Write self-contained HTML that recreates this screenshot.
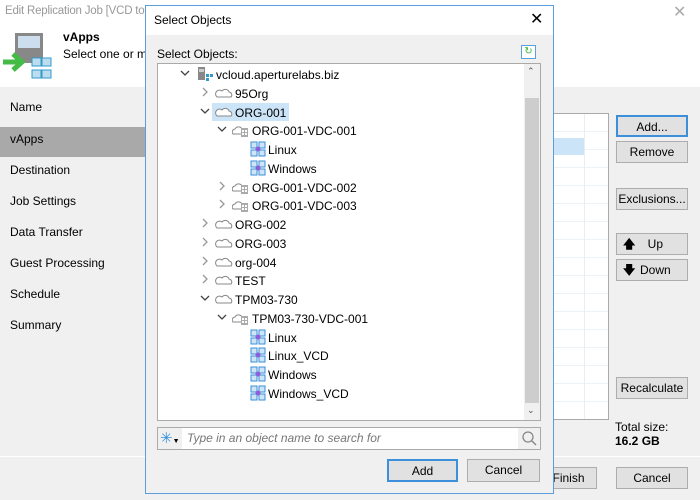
<!DOCTYPE html>
<html><head><style>
*{margin:0;padding:0;box-sizing:border-box}
body{width:700px;height:500px;overflow:hidden;background:#f0f0f0;font-family:"Liberation Sans",sans-serif;font-size:12px;color:#000;position:relative}
.a{position:absolute;white-space:nowrap}
.btn{position:absolute;background:#e1e1e1;border:1px solid #adadad;text-align:center;line-height:20px;font-size:12px}
.nav{position:absolute;left:10px;font-size:12px}
.row{position:absolute;height:18px;line-height:18px;font-size:12px;white-space:nowrap}
.chev{position:absolute;color:#555;font-size:10px}
</style></head><body>
<div class="a" style="left:0;top:0;width:700px;height:87px;background:#fff"></div>
<div class="a" style="left:5px;top:5px;color:#999;font-size:11.5px;letter-spacing:-0.2px">Edit Replication Job [VCD to</div>
<div class="a" style="left:673px;top:2px;color:#aaa;font-size:16px">✕</div>
<svg class="a" style="left:0;top:30px" width="55" height="52">
<rect x="15" y="3" width="28" height="30" fill="#888"/><rect x="18" y="6" width="22" height="12" fill="#cde"/>
<rect x="32" y="28" width="9" height="8" fill="#bde" stroke="#39c"/><rect x="42" y="28" width="9" height="8" fill="#bde" stroke="#39c"/><rect x="32" y="40" width="9" height="8" fill="#bde" stroke="#39c"/><rect x="42" y="40" width="9" height="8" fill="#bde" stroke="#39c"/>
<path d="M3 32h16M13 24l9 8-9 8" stroke="#4b4" stroke-width="5" fill="none"/>
</svg>
<div class="a" style="left:63px;top:30px;font-weight:bold">vApps</div>
<div class="a" style="left:63px;top:47px">Select one or mo</div>
<div class="a" style="left:0;top:127px;width:145px;height:30px;background:#a9a9a9"></div>
<div class="nav" style="top:100px">Name</div>
<div class="nav" style="top:132px">vApps</div>
<div class="nav" style="top:163px">Destination</div>
<div class="nav" style="top:194px">Job Settings</div>
<div class="nav" style="top:225px">Data Transfer</div>
<div class="nav" style="top:256px">Guest Processing</div>
<div class="nav" style="top:287px">Schedule</div>
<div class="nav" style="top:318px">Summary</div>
<div class="a" style="left:0;top:456px;width:700px;height:1px;background:#fff"></div>
<div class="a" style="left:545px;top:113px;width:64px;height:307px;border:1px solid #aaa;background:#fff repeating-linear-gradient(#fff 0 17px,#edf2f7 17px 18px)"></div>
<div class="a" style="left:553px;top:138px;width:31px;height:17px;background:#cce4f7"></div>
<div class="a" style="left:584px;top:114px;width:1px;height:305px;background:#e8eef5"></div>
<div class="btn" style="left:616px;top:115px;width:72px;height:22px;border:2px solid #3c8fd8">Add...</div>
<div class="btn" style="left:616px;top:141px;width:72px;height:22px">Remove</div>
<div class="btn" style="left:616px;top:188px;width:72px;height:22px">Exclusions...</div>
<div class="btn" style="left:616px;top:233px;width:72px;height:22px"><b style="position:absolute;left:6px">🡅</b>&nbsp;&nbsp;Up</div>
<div class="btn" style="left:616px;top:259px;width:72px;height:22px"><b style="position:absolute;left:6px">🡇</b>&nbsp;&nbsp;Down</div>
<div class="btn" style="left:616px;top:377px;width:72px;height:22px">Recalculate</div>
<div class="a" style="left:615px;top:420px">Total size:</div>
<div class="a" style="left:615px;top:434px;font-weight:bold">16.2 GB</div>
<div class="btn" style="left:540px;top:467px;width:57px;height:22px">Finish</div>
<div class="btn" style="left:616px;top:467px;width:72px;height:22px">Cancel</div>
<div class="a" style="left:145px;top:5px;width:409px;height:489px;background:#f0f0f0;border:1px solid #5a9fdc"></div>
<div class="a" style="left:146px;top:6px;width:407px;height:29px;background:#fff"></div>
<div class="a" style="left:154px;top:13px">Select Objects</div>
<div class="a" style="left:530px;top:9px;font-size:16px">✕</div>
<div class="a" style="left:157px;top:47px">Select Objects:</div>
<div class="a" style="left:521px;top:45px;width:15px;height:14px;border:1px solid #5aa0dc;background:#fff;color:#3b3;font-size:10px;line-height:12px;text-align:center">↻</div>
<div class="a" style="left:157px;top:63px;width:384px;height:358px;background:#fff;border:1px solid #aaa"></div>
<div class="a" style="left:524px;top:64px;width:16px;height:356px;background:#f0f0f0"></div>
<div class="a" style="left:525px;top:98px;width:14px;height:305px;background:#cdcdcd"></div>
<div class="a" style="left:527px;top:66px;font-size:9px;color:#555">⌃</div>
<div class="a" style="left:527px;top:405px;font-size:9px;color:#555">⌄</div>
<div class="a" style="left:212px;top:103px;width:77px;height:18px;background:#cce4f7"></div>
<div id="tree"></div>
<div class="a" style="left:157px;top:427px;width:384px;height:23px;background:#fff;border:1px solid #aaa"></div>
<div class="a" style="left:158px;top:428px;width:24px;height:21px;background:#f0f0f0;color:#3a8fd8;font-size:15px;line-height:21px;padding-left:2px">✳<span style="font-size:7px;color:#000">▼</span></div>
<div class="a" style="left:187px;top:431px;color:#777;font-style:italic">Type in an object name to search for</div>
<div class="a" style="left:518px;top:428px;width:22px;height:21px;background:#f0f0f0"><svg width="22" height="21"><circle cx="10" cy="9" r="5" fill="none" stroke="#888" stroke-width="1.3"/><path d="M14 13l4 4" stroke="#888" stroke-width="1.5"/></svg></div>
<div class="btn" style="left:387px;top:459px;width:71px;height:23px;border:2px solid #3c8fd8">Add</div>
<div class="btn" style="left:467px;top:459px;width:73px;height:23px">Cancel</div>
<script>
var rows=[[0,'v','s','vcloud.aperturelabs.biz'],[1,'>','c','95Org'],[1,'v','c','ORG-001'],[2,'v','d','ORG-001-VDC-001'],[3,'','a','Linux'],[3,'','a','Windows'],[2,'>','d','ORG-001-VDC-002'],[2,'>','d','ORG-001-VDC-003'],[1,'>','c','ORG-002'],[1,'>','c','ORG-003'],[1,'>','c','org-004'],[1,'>','c','TEST'],[1,'v','c','TPM03-730'],[2,'v','d','TPM03-730-VDC-001'],[3,'','a','Linux'],[3,'','a','Linux_VCD'],[3,'','a','Windows'],[3,'','a','Windows_VCD']];
var icons={s:'<svg width="17" height="16"><rect x="1" y="1" width="7" height="13" fill="#888"/><rect x="2" y="3" width="5" height="3" fill="#ccc"/><rect x="9" y="8" width="3" height="3" fill="#39c"/><rect x="13" y="8" width="3" height="3" fill="#39c"/><rect x="9" y="12" width="3" height="3" fill="#39c"/></svg>',
c:'<svg width="18" height="16"><path d="M2 12h14a3 3 0 0 0-2-5 4 4 0 0 0-7-1 3 3 0 0 0-5 6z" fill="#fff" stroke="#888"/></svg>',
d:'<svg width="18" height="16"><path d="M1 12h10a3 3 0 0 0-1-5 4 4 0 0 0-7 0 3 3 0 0 0-2 5z" fill="#fff" stroke="#888"/><rect x="9" y="6" width="7" height="9" fill="#aaa"/><rect x="10" y="8" width="2" height="2" fill="#fff"/><rect x="13" y="8" width="2" height="2" fill="#fff"/><rect x="10" y="11" width="2" height="2" fill="#fff"/><rect x="13" y="11" width="2" height="2" fill="#fff"/></svg>',
a:'<svg width="16" height="16"><g fill="#cfe5f7" stroke="#3a8fd8"><rect x="1" y="1" width="6" height="6"/><rect x="9" y="1" width="6" height="6"/><rect x="1" y="9" width="6" height="6"/><rect x="9" y="9" width="6" height="6"/></g><circle cx="8" cy="8" r="2.5" fill="#8a5fd8"/></svg>'};
var h='',x0=[180,200,217,232],ic=[197,215,232,250];
rows.forEach(function(r,i){var y=66+i*18.75;
if(r[1])h+='<div class="chev" style="left:'+x0[r[0]]+'px;top:'+(y+2)+'px">'+(r[1]=='v'?'<svg width="10" height="10"><path d="M1 3l4 4 4-4" stroke="#444" stroke-width="1.3" fill="none"/></svg>':'<svg width="10" height="10"><path d="M3 1l4 4-4 4" stroke="#999" stroke-width="1.3" fill="none"/></svg>')+'</div>';
h+='<div class="row" style="left:'+ic[r[0]]+'px;top:'+y+'px"><span style="display:inline-block;vertical-align:-3px;margin-right:2px">'+icons[r[2]]+'</span>'+r[3]+'</div>';});
document.getElementById('tree').innerHTML=h;
</script>
</body></html>
